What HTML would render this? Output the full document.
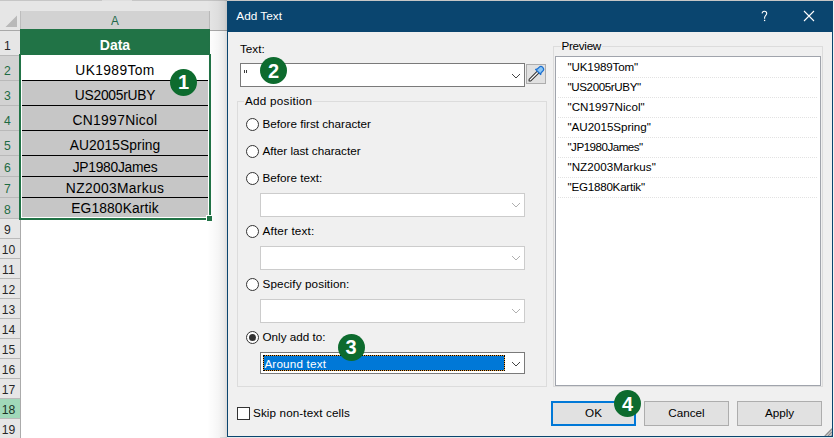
<!DOCTYPE html>
<html><head><meta charset="utf-8">
<style>
*{margin:0;padding:0;box-sizing:border-box}
html,body{width:834px;height:438px;overflow:hidden;background:#fff;font-family:"Liberation Sans",sans-serif}
.a{position:absolute}
.t{position:absolute;white-space:nowrap;line-height:1}
.rh{position:absolute;left:0;width:20px;background:#e6e6e6;border-bottom:1px solid #b9b9b9;color:#262626;font-size:13.5px;text-align:center}
.rh .t{transform:scaleX(0.9)}
.rh.s{background:#d2d2d2;color:#1d6b43}
.cell{position:absolute;left:0;width:834px;font-size:13.8px;color:#000;text-align:center}
.dl{font-size:11.7px;color:#000}
.radio{position:absolute;left:246px;width:13px;height:13px;border:1px solid #333;border-radius:50%;background:#fff}
.combo{position:absolute;left:260px;width:265px;border:1px solid #cccccc;background:#fff}
.chev{position:absolute;width:9px;height:5px}
.btn{position:absolute;top:401px;width:85px;height:25px;background:#e1e1e1;border:1px solid #adadad;font-size:11.7px;text-align:center}
.badge{position:absolute;width:27px;height:27px;border-radius:50%;background:#0d6b2e;color:#fff;font-weight:bold;font-size:20px;text-align:center;line-height:27px}
.li{position:absolute;left:567.5px;font-size:11.6px;color:#000}
.dot{position:absolute;left:558px;width:260px;height:1px;background-image:linear-gradient(to right,#e2e2e2 50%,transparent 50%);background-size:2px 1px}
</style></head><body>

<!-- ===== Spreadsheet ===== -->
<div class="a" style="left:0;top:0;width:227px;height:30px;background:#e6e6e6"></div>
<div class="a" style="left:0;top:0;width:834px;height:1px;background:#c6c6c6"></div>
<div class="a" style="left:102px;top:0;width:30px;height:1px;background:#dedede"></div>
<svg class="a" style="left:0;top:0" width="20" height="30"><polygon points="5.5,27 17,27 17,15.5" fill="#b9b9b9"/></svg>
<div class="a" style="left:20px;top:11px;width:190px;height:18px;background:#d2d2d2"></div>
<div class="a" style="left:20px;top:11px;width:1px;height:18px;background:#bdbdbd"></div>
<div class="t" style="left:20px;width:190px;text-align:center;top:14px;font-size:13px;color:#22694a;transform:scaleX(0.9)">A</div>
<div class="a" style="left:0;top:30px;width:20px;height:1px;background:#a8a8a8"></div>
<div class="a" style="left:209px;top:11px;width:1px;height:18px;background:#bababa"></div>
<div class="a" style="left:210px;top:30px;width:17px;height:1px;background:#a8a8a8"></div>

<!-- row headers -->
<div class="rh" style="top:31px;height:25px;"><span class="t" style="left:0;width:15px;top:7.8px">1</span></div>
<div class="rh s" style="top:56px;height:25px;"><span class="t" style="left:0;width:15px;top:8px">2</span></div>
<div class="rh s" style="top:81px;height:25px;"><span class="t" style="left:0;width:15px;top:8px">3</span></div>
<div class="rh s" style="top:106px;height:25px;"><span class="t" style="left:0;width:15px;top:8px">4</span></div>
<div class="rh s" style="top:131px;height:25px;"><span class="t" style="left:0;width:15px;top:8px">5</span></div>
<div class="rh s" style="top:156px;height:21px;"><span class="t" style="left:0;width:15px;top:5px">6</span></div>
<div class="rh s" style="top:177px;height:21px;"><span class="t" style="left:0;width:15px;top:5px">7</span></div>
<div class="rh s" style="top:198px;height:21px;"><span class="t" style="left:0;width:15px;top:5px">8</span></div>
<div class="rh" style="top:219px;height:20px;"><span class="t" style="left:0;width:15px;top:4px">9</span></div>
<div class="rh" style="top:239px;height:20px;"><span class="t" style="left:0;width:16.8px;top:4px">10</span></div>
<div class="rh" style="top:259px;height:20px;"><span class="t" style="left:0;width:16.8px;top:4px">11</span></div>
<div class="rh" style="top:279px;height:20px;"><span class="t" style="left:0;width:16.8px;top:4px">12</span></div>
<div class="rh" style="top:299px;height:20px;"><span class="t" style="left:0;width:16.8px;top:4px">13</span></div>
<div class="rh" style="top:319px;height:20px;"><span class="t" style="left:0;width:16.8px;top:4px">14</span></div>
<div class="rh" style="top:339px;height:20px;"><span class="t" style="left:0;width:16.8px;top:4px">15</span></div>
<div class="rh" style="top:359px;height:20px;"><span class="t" style="left:0;width:16.8px;top:4px">16</span></div>
<div class="rh" style="top:379px;height:20px;"><span class="t" style="left:0;width:16.8px;top:4px">17</span></div>
<div class="rh" style="top:399px;height:20px;background:#a0d8b9;color:#1a3326;"><span class="t" style="left:0;width:16.8px;top:4px">18</span></div>
<div class="rh" style="top:419px;height:20px;"><span class="t" style="left:0;width:16.8px;top:4px">19</span></div>
<div class="a" style="left:20px;top:219px;width:1px;height:219px;background:#ababab"></div>

<!-- cells -->
<div class="a" style="left:20px;top:29px;width:190px;height:26px;background:#217346"></div>
<div class="t" style="left:20px;width:190px;text-align:center;top:37.8px;font-size:14px;font-weight:bold;color:#fff">Data</div>
<div class="a" style="left:22px;top:80px;width:186px;height:137px;background:#c6c6c6"></div>
<div class="a" style="left:22px;top:80px;width:186px;height:1px;background:#000"></div>
<div class="a" style="left:22px;top:105px;width:186px;height:1px;background:#000"></div>
<div class="a" style="left:22px;top:130px;width:186px;height:1px;background:#000"></div>
<div class="a" style="left:22px;top:155px;width:186px;height:1px;background:#000"></div>
<div class="a" style="left:22px;top:176px;width:186px;height:1px;background:#000"></div>
<div class="a" style="left:22px;top:197px;width:186px;height:1px;background:#000"></div>
<div class="t" style="left:20px;width:190px;text-align:center;top:63.7px;font-size:13.8px;letter-spacing:0.39px">UK1989Tom</div>
<div class="t" style="left:20px;width:190px;text-align:center;top:88.7px;font-size:13.8px;letter-spacing:-0.23px">US2005rUBY</div>
<div class="t" style="left:20px;width:190px;text-align:center;top:113.7px;font-size:13.8px;letter-spacing:0.33px">CN1997Nicol</div>
<div class="t" style="left:20px;width:190px;text-align:center;top:138.8px;font-size:13.8px;letter-spacing:0.06px">AU2015Spring</div>
<div class="t" style="left:20px;width:190px;text-align:center;top:161px;font-size:13.8px;letter-spacing:-0.26px">JP1980James</div>
<div class="t" style="left:20px;width:190px;text-align:center;top:181.8px;font-size:13.8px;letter-spacing:0.33px">NZ2003Markus</div>
<div class="t" style="left:20px;width:190px;text-align:center;top:202.4px;font-size:13.8px;letter-spacing:0.14px">EG1880Kartik</div>
<!-- selection border -->
<div class="a" style="left:19px;top:54px;width:2px;height:166px;background:#217346"></div>
<div class="a" style="left:209px;top:54px;width:2px;height:161px;background:#217346"></div>
<div class="a" style="left:19px;top:218px;width:187px;height:2px;background:#217346"></div>
<div class="a" style="left:206px;top:215px;width:7px;height:7px;background:#217346;border:1px solid #fff"></div>

<!-- shadow -->
<div class="a" style="left:207px;top:0;width:20px;height:438px;background:linear-gradient(to right,rgba(0,0,0,0),rgba(0,0,0,0.035) 55%,rgba(0,0,0,0.08) 85%,rgba(0,0,0,0.14))"></div>

<!-- ===== Dialog ===== -->
<div class="a" style="left:227px;top:1px;width:606px;height:436px;background:#0a456f"></div>
<div class="a" style="left:220px;top:437px;width:614px;height:1px;background:rgba(0,0,0,0.09)"></div>
<div class="a" style="left:833px;top:1px;width:1px;height:437px;background:rgba(0,0,0,0.05)"></div>
<div class="a" style="left:228px;top:32px;width:604px;height:404px;background:#f0f0f0"></div>
<div class="t" style="left:236.3px;top:10.6px;font-size:11.8px;color:#fff">Add Text</div>
<svg class="a" style="left:760px;top:10px" width="10" height="12"><path d="M2 3.4C2.2 2 3.2 1.3 4.4 1.3C5.9 1.3 6.7 2.3 6.7 3.5C6.7 5.3 4.6 5.6 4.6 7.8L4.6 8.7" stroke="#fff" stroke-width="1.1" fill="none"/><rect x="3.95" y="9.8" width="1.3" height="1.3" fill="#fff"/></svg>
<svg class="a" style="left:803px;top:10px" width="12" height="12"><path d="M1 1L11 11M11 1L1 11" stroke="#fff" stroke-width="1.1"/></svg>

<div class="t dl" style="left:240px;top:43px">Text:</div>
<div class="a" style="left:240px;top:63px;width:285px;height:24px;border:1px solid #7a7a7a;background:#fff"></div>
<div class="a" style="left:244px;top:70px;width:1px;height:3px;background:#3a3a3a"></div><div class="a" style="left:246px;top:70px;width:1px;height:3px;background:#3a3a3a"></div>
<svg class="a" style="left:511px;top:73px" width="10" height="6"><path d="M1 1L5 5L9 1" stroke="#444" stroke-width="1" fill="none"/></svg>
<div class="a" style="left:526px;top:64px;width:20px;height:20px;background:#e1e1e1;border:1px solid #adadad"></div>
<svg class="a" style="left:526px;top:64px" width="20" height="20">
 <g transform="translate(12.15 7.95) rotate(-45) scale(0.85)">
  <path d="M-15.2 0L-13.6 -1.4L0 -1.4L0 1.4L-13.6 1.4Z" fill="#fff" stroke="#303030" stroke-width="1.2" stroke-linejoin="round"/>
  <path d="M0 -4.3C0.9 -3.6 1.4 -3.1 2.2 -3.1L4.6 -3.1A3.1 3.1 0 0 1 4.6 3.1L2.2 3.1C1.4 3.1 0.9 3.6 0 4.3Z" fill="#8ac6f4" stroke="#1b6fd1" stroke-width="1.4" stroke-linejoin="round"/>
 </g>
</svg>

<!-- add position group -->
<div class="a" style="left:237px;top:101px;width:310px;height:286px;border:1px solid #dcdcdc"></div>
<div class="t dl" style="left:244px;top:95px;background:#f0f0f0;padding:0 1px;letter-spacing:0.25px">Add position</div>

<div class="radio" style="top:118px"></div>
<div class="t dl" style="left:262.5px;top:117.8px">Before first character</div>
<div class="radio" style="top:145px"></div>
<div class="t dl" style="left:262.5px;top:145px">After last character</div>
<div class="radio" style="top:172px"></div>
<div class="t dl" style="left:262.5px;top:172.2px">Before text:</div>
<div class="combo" style="top:193px;height:24px"></div>
<svg class="a" style="left:511px;top:202px" width="10" height="6"><path d="M1 1L5 5L9 1" stroke="#b0b0b0" stroke-width="1" fill="none"/></svg>
<div class="radio" style="top:225px"></div>
<div class="t dl" style="left:262.5px;top:225px;letter-spacing:0.17px">After text:</div>
<div class="combo" style="top:246px;height:24px"></div>
<svg class="a" style="left:511px;top:255px" width="10" height="6"><path d="M1 1L5 5L9 1" stroke="#b0b0b0" stroke-width="1" fill="none"/></svg>
<div class="radio" style="top:278px"></div>
<div class="t dl" style="left:262.5px;top:278px;letter-spacing:0.11px">Specify position:</div>
<div class="combo" style="top:299px;height:24px"></div>
<svg class="a" style="left:511px;top:308px" width="10" height="6"><path d="M1 1L5 5L9 1" stroke="#b0b0b0" stroke-width="1" fill="none"/></svg>
<div class="radio" style="top:331px"></div>
<div class="a" style="left:249px;top:334px;width:7px;height:7px;border-radius:50%;background:#333"></div>
<div class="t dl" style="left:262.5px;top:331px">Only add to:</div>
<div class="combo" style="top:352px;height:22px;border-color:#7a7a7a"></div>
<div class="a" style="left:263px;top:355px;width:242px;height:16px;background:#e8a040"></div>
<div class="a" style="left:263px;top:355px;width:242px;height:16px;background:#0078d7;background-clip:padding-box;border:1px dotted #000"></div>
<div class="t dl" style="left:264.4px;top:357.5px;color:#fff;letter-spacing:0.18px">Around text</div>
<svg class="a" style="left:511px;top:361px" width="10" height="6"><path d="M1 1L5 5L9 1" stroke="#444" stroke-width="1" fill="none"/></svg>

<!-- preview group -->
<div class="a" style="left:553px;top:46px;width:270px;height:341px;border:1px solid #dcdcdc"></div>
<div class="t dl" style="left:560.5px;top:39.7px;background:#f0f0f0;padding:0 1px;letter-spacing:-0.3px">Preview</div>
<div class="a" style="left:555px;top:56px;width:266px;height:330px;border:1px solid #a0a4ac;background:#fff"></div>
<div class="li t" style="top:61px;letter-spacing:-0.13px">"UK1989Tom"</div>
<div class="dot" style="top:77px"></div>
<div class="li t" style="top:81px;letter-spacing:-0.38px">"US2005rUBY"</div>
<div class="dot" style="top:97px"></div>
<div class="li t" style="top:101px;letter-spacing:0.05px">"CN1997Nicol"</div>
<div class="dot" style="top:117px"></div>
<div class="li t" style="top:121px;letter-spacing:-0.03px">"AU2015Spring"</div>
<div class="dot" style="top:137px"></div>
<div class="li t" style="top:141px;letter-spacing:-0.5px">"JP1980James"</div>
<div class="dot" style="top:157px"></div>
<div class="li t" style="top:161px;letter-spacing:0.06px">"NZ2003Markus"</div>
<div class="dot" style="top:177px"></div>
<div class="li t" style="top:181px;letter-spacing:-0.22px">"EG1880Kartik"</div>
<div class="dot" style="top:197px"></div>

<!-- bottom -->
<div class="a" style="left:237px;top:407px;width:13px;height:13px;border:1px solid #333;background:#fff"></div>
<div class="t dl" style="left:253px;top:406.9px;letter-spacing:0.11px">Skip non-text cells</div>
<div class="btn" style="left:551px;border:2px solid #0078d7"><span class="t" style="left:0;width:81px;top:3.5px">OK</span></div>
<div class="btn" style="left:644px"><span class="t" style="left:0;width:83px;top:4.5px">Cancel</span></div>
<div class="btn" style="left:737px"><span class="t" style="left:0;width:83px;top:4.5px">Apply</span></div>
<svg class="a" style="left:822px;top:426px" width="10" height="10"><path d="M2.8 10.2L10.2 2.8M5.8 10.2L10.2 5.8M8.8 10.2L10.2 8.8" stroke="#8f8f8f" stroke-width="1.5"/></svg>

<!-- badges -->
<div class="badge" style="left:170px;top:69px">1</div>
<div class="badge" style="left:260px;top:57px;line-height:29px">2</div>
<div class="badge" style="left:337.5px;top:334px">3</div>
<div class="badge" style="left:614px;top:390px;line-height:29px">4</div>
</body></html>
